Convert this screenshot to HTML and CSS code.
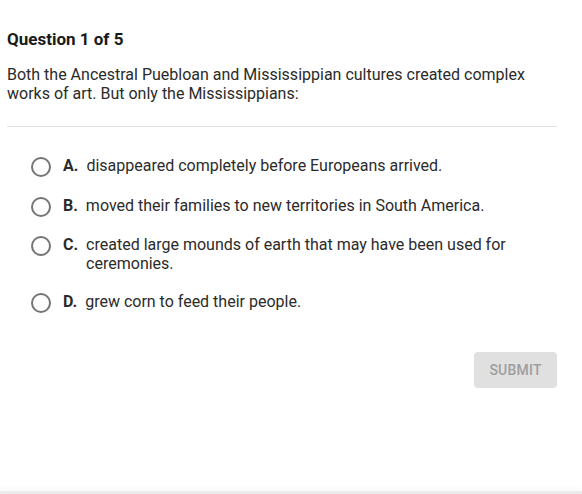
FILE: index.html
```html
<!DOCTYPE html>
<html>
<head>
<meta charset="utf-8">
<link rel="stylesheet" href="styles.css">
</head>
<body>
<main class="quiz">
  <h1 class="q-title">Question 1 of 5</h1>
  <p class="q-text">Both the Ancestral Puebloan and Mississippian cultures created complex works of art. But only the Mississippians:</p>
  <hr class="divider">
  <ul class="options">
    <li class="option"><span class="radio"></span><span class="letter">A.</span><span class="answer">disappeared completely before Europeans arrived.</span></li>
    <li class="option"><span class="radio"></span><span class="letter">B.</span><span class="answer">moved their families to new territories in South America.</span></li>
    <li class="option"><span class="radio"></span><span class="letter">C.</span><span class="answer">created large mounds of earth that may have been used for ceremonies.</span></li>
    <li class="option"><span class="radio"></span><span class="letter">D.</span><span class="answer">grew corn to feed their people.</span></li>
  </ul>
  <div class="actions"><button class="submit">SUBMIT</button></div>
</main>
<div class="bottom-bar"></div>
</body>
</html>
```
FILE: styles.css
```css
html, body {
  margin: 0;
  padding: 0;
  background: #ffffff;
}
body {
  font-family: Roboto, "Liberation Sans", Arial, sans-serif;
  color: #212121;
}
.quiz {
  width: 550px;
  padding: 29px 0 0 7px;
}
.q-title {
  margin: 0;
  font-size: 17px;
  line-height: 21px;
  font-weight: 700;
  color: #1a1a1a;
}
.q-text {
  margin: 15px 0 0;
  font-size: 16px;
  line-height: 19px;
  color: #2b2b2b;
  padding-right: 20px;
}
.divider {
  margin: 23px 0 0;
  border: 0;
  border-top: 1px solid #e0e0e0;
  height: 0;
}
.options {
  list-style: none;
  margin: 0;
  padding: 29px 0 0 24px;
  display: flex;
  flex-direction: column;
  gap: 18.5px;
}
.option {
  display: flex;
  align-items: flex-start;
  min-height: 21px;
  font-size: 16px;
  line-height: 19px;
  color: #2b2b2b;
}
.radio {
  flex: none;
  width: 16px;
  height: 16px;
  border: 2px solid #757575;
  border-radius: 50%;
  margin-top: 1px;
  margin-right: 12px;
}
.letter {
  flex: none;
  font-weight: 700;
  margin-right: 8px;
}
.answer {
  max-width: 440px;
}
.actions {
  display: flex;
  justify-content: flex-end;
  margin-top: 39px;
}
.submit {
  font-family: Roboto, "Liberation Sans", Arial, sans-serif;
  width: 83px;
  height: 36px;
  border: 0;
  border-radius: 4px;
  background: #e0e0e0;
  color: #9e9e9e;
  font-size: 14px;
  font-weight: 500;
  letter-spacing: 0.2px;
  padding: 0;
}
.bottom-bar {
  position: fixed;
  left: 0;
  right: 0;
  bottom: 0;
  height: 3px;
  background: #ececec;
  box-shadow: 0 -2px 5px rgba(0, 0, 0, 0.05);
}
```
